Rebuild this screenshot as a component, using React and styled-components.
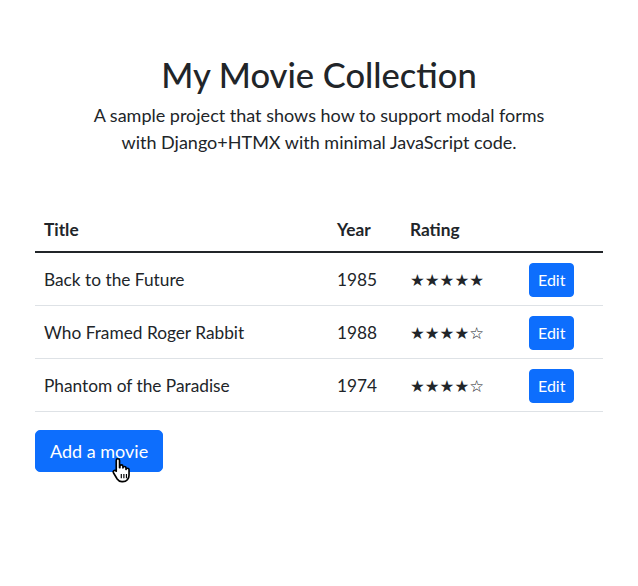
import React from 'react'
import styled, { createGlobalStyle } from 'styled-components'

const GlobalStyle = createGlobalStyle`
  html, body {
    margin: 0;
    padding: 0;
    background: #fff;
  }
  body {
    font-family: Lato, "Noto Sans", sans-serif;
    color: #212529;
  }
`

const movies = [
  { title: 'Back to the Future', year: 1985, rating: 5 },
  { title: 'Who Framed Roger Rabbit', year: 1988, rating: 4 },
  { title: 'Phantom of the Paradise', year: 1974, rating: 4 },
]

const stars = (n) => '★'.repeat(n) + '☆'.repeat(5 - n)

const HandCursor = () => (
  <Cursor viewBox="0 0 17 23" width="20" height="27">
    <path
      d="M5 1.5c.8 0 1.4.6 1.4 1.4v6.3l.3-.1V8c0-.8.6-1.3 1.3-1.3s1.3.5 1.3 1.3v1.3c.1-.7.7-1.2 1.3-1.2.7 0 1.3.6 1.3 1.3v1.2c.2-.6.7-1 1.3-1 .7 0 1.3.6 1.3 1.3v4.6c0 2.9-2 5.5-5.3 5.5H8.4c-1.8 0-3-.8-4-2.3L1.2 13.4c-.4-.6-.2-1.4.4-1.8.6-.4 1.3-.3 1.8.2l.2.3V2.9c0-.8.6-1.4 1.4-1.4z"
      fill="#ffffff"
      stroke="#000000"
      strokeWidth="1.4"
      strokeLinejoin="round"
    />
    <path d="M7.9 14.5v3.5M10.1 14.5v3.5M12.3 14.5v3.5" stroke="#000000" strokeWidth="1" />
  </Cursor>
)

const App = () => {
  return (
    <>
      <GlobalStyle />
      <Page>
        <Header>
          <Heading>My Movie Collection</Heading>
          <Lead>
            A sample project that shows how to support modal forms
            <br />
            with Django+HTMX with minimal JavaScript code.
          </Lead>
        </Header>
        <Table>
          <colgroup>
            <col width="293" />
            <col width="73" />
            <col width="119" />
            <col />
          </colgroup>
          <thead>
            <tr>
              <Th>Title</Th>
              <Th>Year</Th>
              <Th>Rating</Th>
              <Th />
            </tr>
          </thead>
          <tbody>
            {movies.map((m) => (
              <tr key={m.title}>
                <Td>{m.title}</Td>
                <Td>{m.year}</Td>
                <Td>
                  <Stars>{stars(m.rating)}</Stars>
                </Td>
                <Td>
                  <EditButton>Edit</EditButton>
                </Td>
              </tr>
            ))}
          </tbody>
        </Table>
        <AddWrap>
          <AddButton>Add a movie</AddButton>
          <HandCursor />
        </AddWrap>
      </Page>
    </>
  )
}

export default App

const Page = styled.div`
  width: 568px;
  margin: 0 auto;
  padding-top: 54px;
  padding-bottom: 60px;
`

const Header = styled.div`
  text-align: center;
  margin-bottom: 54px;
`

const Heading = styled.h1`
  font-size: 34.5px;
  font-weight: 500;
  line-height: 1.2;
  margin: 0 0 7px;
`

const Lead = styled.p`
  font-size: 18px;
  font-weight: 400;
  line-height: 27px;
  margin: 0;
`

const Table = styled.table`
  width: 100%;
  table-layout: fixed;
  border-collapse: collapse;
  font-size: 17.3px;
  line-height: 24px;
`

const Th = styled.th`
  text-align: left;
  font-weight: 700;
  padding: 8px 8px 9px 9px;
  border-bottom: 2px solid #212529;
`

const Td = styled.td`
  padding: 10px 8px 8px 9px;
  height: 34px;
  vertical-align: middle;
  border-bottom: 1px solid #dee2e6;
`

const Stars = styled.span`
  font-family: "DejaVu Sans", sans-serif;
  font-size: 16.5px;
`

const EditButton = styled.button`
  display: block;
  font-family: inherit;
  font-size: 16px;
  line-height: 22px;
  color: #fff;
  background: #0d6efd;
  border: 1px solid #0d6efd;
  border-radius: 4px;
  padding: 5px 8px;
  height: 34px;
  cursor: pointer;
`

const AddWrap = styled.div`
  position: relative;
  margin-top: 18px;
  width: max-content;
`

const AddButton = styled.button`
  display: block;
  font-family: inherit;
  font-size: 18px;
  line-height: 27px;
  color: #fff;
  background: #0d6efd;
  border: 1px solid #0d6efd;
  border-radius: 5px;
  padding: 7px 14px;
  height: 42px;
  cursor: pointer;
`

const Cursor = styled.svg`
  position: absolute;
  left: 77px;
  top: 27px;
  z-index: 2;
  display: block;
  overflow: visible;
  pointer-events: none;
`
